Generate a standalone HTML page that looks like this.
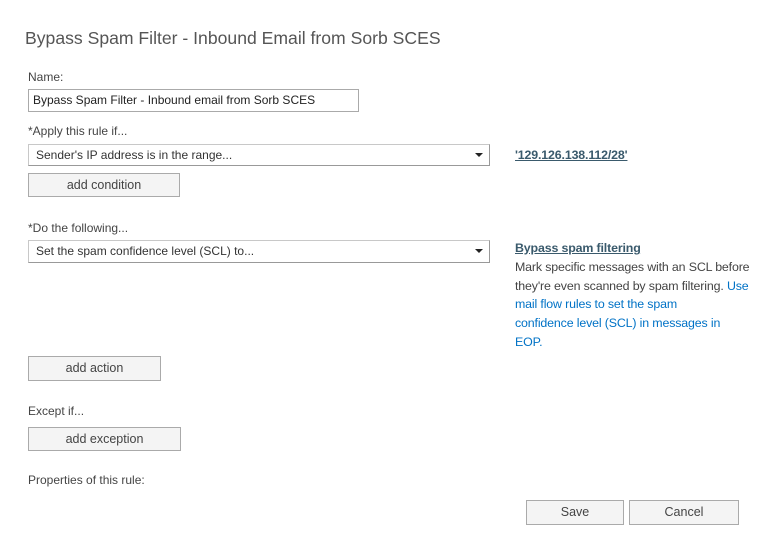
<!DOCTYPE html>
<html><head><style>
body{margin:0;width:760px;height:537px;background:#fff;font-family:"Liberation Sans",sans-serif;color:#444;position:relative;overflow:hidden}
.a{position:absolute;white-space:nowrap}
.lbl{font-size:12px;color:#444}
.box{position:absolute;border:1px solid #aaa;background:#fff;font-size:12px;color:#222;box-sizing:border-box}
.dd{position:absolute;border:1px solid #c8c8c8;border-right-color:#999;border-bottom-color:#999;background:#fff;font-size:12px;color:#333;box-sizing:border-box;padding-left:7px;line-height:20px}
.dd:after{content:"";position:absolute;right:6px;top:8px;border-left:4px solid transparent;border-right:4px solid transparent;border-top:4px solid #222}
.btn{position:absolute;border:1px solid #aaa;background:#f4f4f4;font-size:12.5px;color:#444;box-sizing:border-box;text-align:center;line-height:23px}
.rt{position:absolute;left:515px;font-size:12.4px;letter-spacing:-0.15px;line-height:18.8px;white-space:nowrap;color:#444}
</style></head><body>
<div class="a" style="left:25px;top:28px;font-size:17.6px;color:#555">Bypass Spam Filter - Inbound Email from Sorb SCES</div>
<div class="a lbl" style="left:28px;top:70px">Name:</div>
<div class="box" style="left:28px;top:89px;width:331px;height:23px;padding:3px 0 0 4px">Bypass Spam Filter - Inbound email from Sorb SCES</div>
<div class="a lbl" style="left:28px;top:124px">*Apply this rule if...</div>
<div class="dd" style="left:28px;top:144px;width:462px;height:22px">Sender's IP address is in the range...</div>
<div class="btn" style="left:28px;top:173px;width:152px;height:24px">add condition</div>
<div class="a lbl" style="left:28px;top:221px">*Do the following...</div>
<div class="dd" style="left:28px;top:240px;width:462px;height:23px">Set the spam confidence level (SCL) to...</div>
<div class="rt" style="top:146px;font-weight:bold;color:#3a5a6c;text-decoration:underline">'129.126.138.112/28'</div>
<div class="rt" style="top:239px"><span style="font-weight:bold;color:#3a5a6c;text-decoration:underline">Bypass spam filtering</span><br>Mark specific messages with an SCL before<br>they're even scanned by spam filtering. <span style="color:#0072c6">Use<br>mail flow rules to set the spam<br>confidence level (SCL) in messages in<br>EOP.</span></div>
<div class="btn" style="left:28px;top:356px;width:133px;height:25px">add action</div>
<div class="a lbl" style="left:28px;top:404px">Except if...</div>
<div class="btn" style="left:28px;top:427px;width:153px;height:24px">add exception</div>
<div class="a lbl" style="left:28px;top:473px">Properties of this rule:</div>
<div class="btn" style="left:526px;top:500px;width:98px;height:25px">Save</div>
<div class="btn" style="left:629px;top:500px;width:110px;height:25px">Cancel</div>
</body></html>
